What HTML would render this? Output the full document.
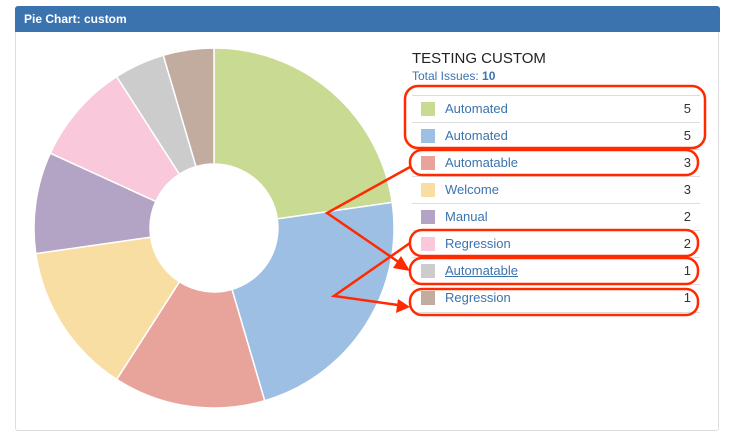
<!DOCTYPE html>
<html><head><meta charset="utf-8"><style>
body{margin:0;background:#fff;font-family:"Liberation Sans",sans-serif;width:736px;height:441px;position:relative;overflow:hidden}
.panel{position:absolute;left:15px;top:6px;width:704px;height:425px;border:1px solid #ddd;border-radius:3px;box-sizing:border-box}
.hd{position:absolute;left:15px;top:6px;width:705px;height:26px;background:#3b73af;color:#fff;font-weight:bold;font-size:12px;line-height:26px;padding-left:9px;box-sizing:border-box;border-radius:3px 3px 0 0}
.title{position:absolute;left:412px;top:50px;font-size:15px;color:#222}
.tot{position:absolute;left:412px;top:69px;font-size:12px;color:#3b73af}
.row{position:absolute;left:412px;width:288px;height:27px;border-top:1px solid #ddd;font-size:13px;line-height:26px;color:#3b73af}
.sq{position:absolute;left:9px;top:6px;width:14px;height:14px}
.lb{position:absolute;left:33px}
.n{position:absolute;right:9px;color:#333}
</style></head><body>
<div class="panel"></div>
<div class="hd">Pie Chart: custom</div>
<svg width="736" height="441" style="position:absolute;left:0;top:0">
<g stroke="#fff" stroke-width="1.5">
<path d="M214,48 A180,180 0 0 1 392.2,202.4 L277.3,218.9 A64,64 0 0 0 214,164Z" fill="#c9da92"/>
<path d="M392.2,202.4 A180,180 0 0 1 264.7,400.7 L232,289.4 A64,64 0 0 0 277.3,218.9Z" fill="#9dbfe3"/>
<path d="M264.7,400.7 A180,180 0 0 1 116.7,379.4 L179.4,281.8 A64,64 0 0 0 232,289.4Z" fill="#e8a39b"/>
<path d="M116.7,379.4 A180,180 0 0 1 35.8,253.6 L150.7,237.1 A64,64 0 0 0 179.4,281.8Z" fill="#f9dea3"/>
<path d="M35.8,253.6 A180,180 0 0 1 50.3,153.2 L155.8,201.4 A64,64 0 0 0 150.7,237.1Z" fill="#b3a3c4"/>
<path d="M50.3,153.2 A180,180 0 0 1 116.7,76.6 L179.4,174.2 A64,64 0 0 0 155.8,201.4Z" fill="#f9c8db"/>
<path d="M116.7,76.6 A180,180 0 0 1 163.3,55.3 L196,166.6 A64,64 0 0 0 179.4,174.2Z" fill="#cccccc"/>
<path d="M163.3,55.3 A180,180 0 0 1 214,48 L214,164 A64,64 0 0 0 196,166.6Z" fill="#c2ac9f"/>
</g>
</svg>
<div class="title">TESTING CUSTOM</div>
<div class="tot">Total Issues: <b>10</b></div>
<div class="row" style="top:95px"><div class="sq" style="background:#c9da92"></div><span class="lb">Automated</span><span class="n">5</span></div>
<div class="row" style="top:122px"><div class="sq" style="background:#9dbfe3"></div><span class="lb">Automated</span><span class="n">5</span></div>
<div class="row" style="top:149px"><div class="sq" style="background:#e8a39b"></div><span class="lb">Automatable</span><span class="n">3</span></div>
<div class="row" style="top:176px"><div class="sq" style="background:#f9dea3"></div><span class="lb">Welcome</span><span class="n">3</span></div>
<div class="row" style="top:203px"><div class="sq" style="background:#b3a3c4"></div><span class="lb">Manual</span><span class="n">2</span></div>
<div class="row" style="top:230px"><div class="sq" style="background:#f9c8db"></div><span class="lb">Regression</span><span class="n">2</span></div>
<div class="row" style="top:257px"><div class="sq" style="background:#cccccc"></div><span class="lb" style="text-decoration:underline">Automatable</span><span class="n">1</span></div>
<div class="row" style="top:284px;border-bottom:1px solid #ddd"><div class="sq" style="background:#c2ac9f"></div><span class="lb">Regression</span><span class="n">1</span></div>
<svg width="736" height="441" style="position:absolute;left:0;top:0">
<g fill="none" stroke="#ff2a00" stroke-width="2.5">
<rect x="405" y="86" width="300" height="62" rx="13"/>
<rect x="410" y="150" width="288" height="25" rx="12"/>
<rect x="410" y="230" width="288" height="26" rx="12"/>
<rect x="410" y="258" width="288" height="26" rx="12"/>
<rect x="410" y="289" width="288" height="26" rx="12"/>
<path d="M410,167 L327,213 L400,263"/>
<path d="M410,243 L334,296 L398,305"/>
</g>
<g fill="#ff2a00">
<path d="M410,271 L393,268 L401,256Z"/>
<path d="M410,307 L396,313 L398,299Z"/>
</g>
</svg>
</body></html>
